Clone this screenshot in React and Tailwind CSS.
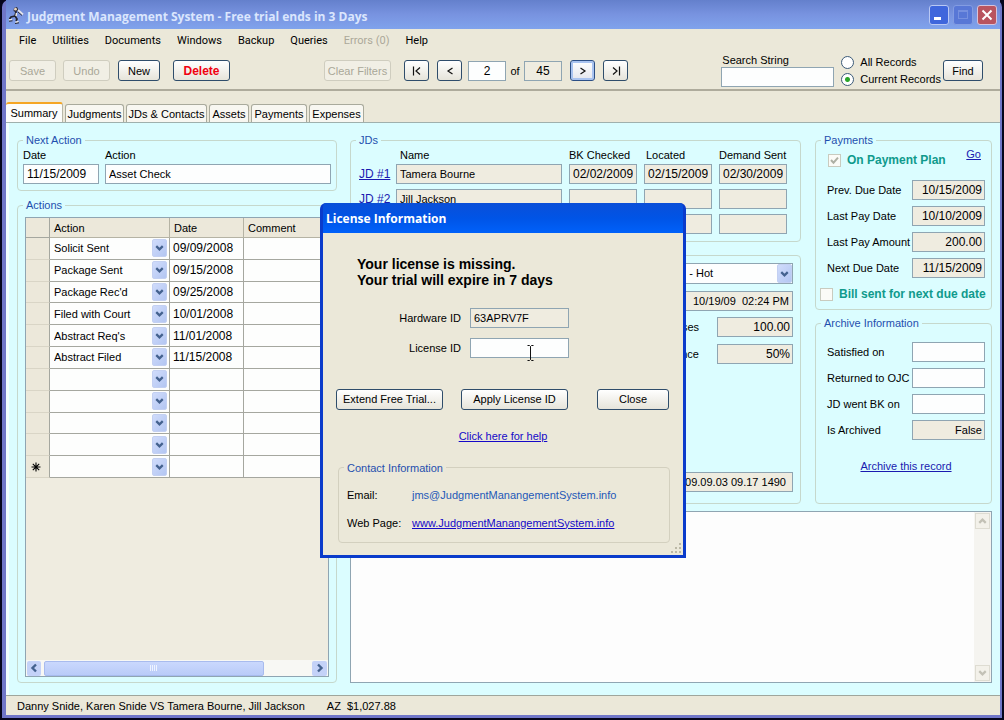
import React from "react";

const BODY = "font-['Liberation_Sans',Arial,sans-serif]";

function Group({ title, className = "", bodyClass = "", border = "border-[#c6d8cc]", children }) {
  return (
    <fieldset className={`min-w-0 rounded-[4px] border ${border} ${className}`}>
      {title && (
        <legend className="ml-[5px] px-[3px] leading-[14px] text-[#1f4fae]">{title}</legend>
      )}
      <div className={bodyClass}>{children}</div>
    </fieldset>
  );
}

function Field({ id, label, value = "", readOnly = false, size = "text-[11px]", className = "px-[3px]" }) {
  return (
    <input
      id={id}
      aria-label={label}
      defaultValue={value}
      readOnly={readOnly}
      className={`h-5 w-full min-w-0 border border-[#8fa5b2] leading-[18px] text-black outline-none ${size} ${
        readOnly ? "bg-[#efece0]" : "bg-[#fdfefe]"
      } ${className}`}
    />
  );
}

function XpButton({ children, className = "", disabled = false, label, active = false }) {
  const look = disabled
    ? "border-[#cfcdbf] bg-[#f1efe5] text-[#a9a798]"
    : active
      ? "border-[#2c4f86] bg-linear-to-b from-white to-[#e4e6ee] text-black shadow-[inset_0_0_0_2px_#a9c3f0]"
      : "border-[#2f4d6b] bg-linear-to-b from-white to-[#e6e4da] text-black";
  return (
    <button
      type="button"
      disabled={disabled}
      aria-label={label}
      className={`flex h-[21px] items-center justify-center rounded-[3px] border leading-[14px] whitespace-nowrap ${look} ${className}`}
    >
      {children}
    </button>
  );
}

function Chevron({ dir = "down", muted = false }) {
  const d = {
    down: "M3.5 5 L7 8.5 L10.5 5",
    up: "M3.5 9 L7 5.5 L10.5 9",
    left: "M9 3.5 L5.5 7 L9 10.5",
    right: "M5 3.5 L8.5 7 L5 10.5",
  }[dir];
  return (
    <svg viewBox="0 0 14 14" className="size-[14px]" aria-hidden="true">
      <path d={d} fill="none" stroke={muted ? "#c3c1b6" : "#44628f"} strokeWidth="2.4" />
    </svg>
  );
}

function DropArrow({ className = "" }) {
  return (
    <span
      className={`pointer-events-none absolute flex w-[15px] items-center justify-center rounded-[2px] border border-[#c3d0f2] bg-linear-to-br from-[#d0dcfb] to-[#b3c6f2] ${className}`}
    >
      <Chevron />
    </span>
  );
}

const NAV = {
  first: "M3.5 2.5 V11.5 M10 3.5 L6 7 L10 10.5",
  prev: "M9.5 4 L5 7 L9.5 10",
  next: "M4.5 4 L9 7 L4.5 10",
  last: "M4 3.5 L8 7 L4 10.5 M10.5 2.5 V11.5",
};

function NavIcon({ name }) {
  return (
    <svg viewBox="0 0 14 14" className="size-[14px]" aria-hidden="true">
      <path d={NAV[name]} fill="none" stroke="#111" strokeWidth="1.2" />
    </svg>
  );
}

function TitleBar() {
  return (
    <header className="flex h-[29px] items-center bg-linear-to-b from-[#6480cc] via-[#7893e0] to-[#80a3ec] pr-[3px] pl-[2px]">
      <svg viewBox="0 0 16 18" className="h-[18px] w-4" aria-hidden="true">
        <path d="M6 2 L9 1 L10.5 4 L8 6.5 L5.5 5 Z" fill="#2a2a35" />
        <circle cx="7.5" cy="3.2" r="1.4" fill="#e8d4c0" />
        <path d="M10 4 L15 8.5" stroke="#e4e4ea" strokeWidth="1.8" />
        <path d="M10 6 L14 9.5" stroke="#30303c" strokeWidth="1" />
        <path d="M8 6 L7 10 L9 13 L8 15 M7 10 L3 11 L1.5 13" stroke="#23232d" strokeWidth="1.7" fill="none" />
        <path d="M8.5 7 L8 10 M1 14 L4 13.5 M7.5 16.5 L10.5 15.5" stroke="#f0ece4" strokeWidth="1.5" />
        <path d="M1 15.2 L4.5 14.8 M7 17.5 L11 16.8" stroke="#23232d" strokeWidth="1" />
      </svg>
      <h1 className="ml-[3px] pt-1 font-['Open_Sans','Noto_Sans',sans-serif] text-[12px] leading-[16px] font-bold text-[#dbe6fd]">
        Judgment Management System - Free trial ends in 3 Days
      </h1>
      <div className="ml-auto flex gap-[4px]">
        <button type="button" aria-label="Minimize" className="flex size-[20px] items-end rounded-[3px] border border-[#b9c8f4] bg-[#3f66dc] p-1">
          <span className="h-[3px] w-[7px] bg-white" />
        </button>
        <button type="button" aria-label="Maximize" disabled className="flex size-[20px] items-center justify-center rounded-[3px] border border-[#839ce2] bg-[#5877d6]">
          <span className="h-[9px] w-[10px] border border-t-2 border-[#7690df]" />
        </button>
        <button type="button" aria-label="Close window" className="flex size-[20px] items-center justify-center rounded-[3px] border border-[#d5c3dc] bg-[#b9545f]">
          <svg viewBox="0 0 14 14" className="size-[14px]" aria-hidden="true">
            <path d="M2.5 2.5 L11.5 11.5 M11.5 2.5 L2.5 11.5" stroke="#fff" strokeWidth="2" />
          </svg>
        </button>
      </div>
    </header>
  );
}

const MENUS = ["File", "Utilities", "Documents", "Windows", "Backup", "Queries", "Errors (0)", "Help"];

function MenuBar() {
  return (
    <nav className="flex h-[24px] items-center gap-[16px] pl-[13px] font-['Roboto','Noto_Sans',sans-serif]">
      {MENUS.map((m) => (
        <button
          key={m}
          type="button"
          disabled={m === "Errors (0)"}
          className="leading-[14px] whitespace-nowrap text-black disabled:text-[#aca999]"
        >
          {m}
        </button>
      ))}
    </nav>
  );
}

function Radio({ id, label, checked }) {
  return (
    <div className="flex items-center gap-[6px]">
      <input
        id={id}
        type="radio"
        name="scope"
        defaultChecked={checked}
        className="size-[13px] appearance-none rounded-full border border-[#3b5a78] bg-white checked:bg-[radial-gradient(circle,#2ba52b_0_2px,#fff_3px)]"
      />
      <label htmlFor={id} className="leading-[14px] whitespace-nowrap">{label}</label>
    </div>
  );
}

function Toolbar() {
  return (
    <div className="flex h-[38px] items-start border-b-2 border-[#aeab9c] pr-[17px] pl-[3px]">
      <div className="flex pt-[7px]">
        <XpButton disabled className="w-[47px]">Save</XpButton>
        <XpButton disabled className="ml-[7px] w-[47px]">Undo</XpButton>
        <XpButton className="ml-2 w-[42px]">New</XpButton>
        <XpButton className="ml-[13px] w-[57px]">
          <span className="text-[12px] font-bold text-[#f00010]">Delete</span>
        </XpButton>
      </div>
      <div className="ml-[94px] flex items-center pt-[7px]">
        <XpButton disabled className="w-[67px]">Clear Filters</XpButton>
        <XpButton label="First record" className="ml-[13px] w-[25px]"><NavIcon name="first" /></XpButton>
        <XpButton label="Previous record" className="ml-2 w-[25px]"><NavIcon name="prev" /></XpButton>
        <div className="ml-[6px] w-[38px]"><Field label="Record number" value="2" size="text-[12px]" className="text-center" /></div>
        <span className="w-[18px] text-center leading-[14px]">of</span>
        <div className="w-[38px]"><Field label="Record count" value="45" readOnly size="text-[12px]" className="text-center" /></div>
        <XpButton label="Next record" active className="ml-2 w-[25px]"><NavIcon name="next" /></XpButton>
        <XpButton label="Last record" className="ml-2 w-[25px]"><NavIcon name="last" /></XpButton>
      </div>
      <div className="ml-auto flex">
        <div className="w-[113px]">
          <label htmlFor="search" className="block pl-px leading-[14px]">Search String</label>
          <Field id="search" />
        </div>
        <div className="ml-[7px] flex flex-col gap-[3px] pt-[2px]">
          <Radio id="all" label="All Records" />
          <Radio id="current" label="Current Records" checked />
        </div>
        <div className="ml-[2px] pt-[7px]"><XpButton className="w-[40px]">Find</XpButton></div>
      </div>
    </div>
  );
}

const TABS = [
  ["Summary", "w-[57px]"],
  ["Judgments", "w-[59px]"],
  ["JDs & Contacts", "w-[81px]"],
  ["Assets", "w-[40px]"],
  ["Payments", "w-[56px]"],
  ["Expenses", "w-[55px]"],
];

function Tabs() {
  return (
    <div role="tablist" className="flex h-[32px] items-end gap-[2px] border-b border-[#9fb0ad]">
      {TABS.map(([t, w], i) => (
        <button
          key={t}
          type="button"
          role="tab"
          aria-selected={i === 0}
          className={`rounded-t-[3px] leading-[16px] whitespace-nowrap ${w} ${
            i === 0
              ? "h-[20px] border-t-2 border-r border-t-[#f5a623] border-r-[#b9b8a8] bg-[#fcfdfb]"
              : "h-[18px] border border-b-0 border-[#a9aa9c] bg-[#f8f7f1]"
          }`}
        >
          {t}
        </button>
      ))}
    </div>
  );
}

function NextAction() {
  return (
    <Group title="Next Action" bodyClass="flex gap-[6px] px-[5px] pt-px pb-[6px]">
      <div className="w-[76px]">
        <label htmlFor="na-date" className="block pb-[2px] leading-[14px]">Date</label>
        <Field id="na-date" value="11/15/2009" size="text-[12px]" />
      </div>
      <div className="min-w-0 flex-1">
        <label htmlFor="na-action" className="block pb-[2px] leading-[14px]">Action</label>
        <Field id="na-action" value="Asset Check" />
      </div>
    </Group>
  );
}

const ROWS = [
  ["Solicit Sent", "09/09/2008"],
  ["Package Sent", "09/15/2008"],
  ["Package Rec'd", "09/25/2008"],
  ["Filed with Court", "10/01/2008"],
  ["Abstract Req's", "11/01/2008"],
  ["Abstract Filed", "11/15/2008"],
  ["", ""],
  ["", ""],
  ["", ""],
  ["", ""],
  ["", ""],
];

function Actions() {
  const head = "border-r border-b border-[#b5b3a4] pl-1 text-left font-normal";
  const cell = "border-r border-b border-[#a5a79f] bg-[#fdfefd] p-0";
  return (
    <Group title="Actions" className="flex flex-1 flex-col" bodyClass="flex flex-1 flex-col px-[7px] pt-[5px] pb-[5px]">
      <div className="flex flex-1 flex-col border border-[#8fa5b2] bg-[#efece0]">
        <table className="h-[260px] w-full table-fixed border-separate border-spacing-0 leading-[14px]">
          <thead>
            <tr className="h-[20px] bg-[#ece8da]">
              <th aria-label="Row" className="w-[24px] border-r border-b border-[#a5a79f]" />
              <th className={`w-[120px] ${head}`}>Action</th>
              <th className={`w-[74px] ${head}`}>Date</th>
              <th className={head}>Comment</th>
            </tr>
          </thead>
          <tbody>
            {ROWS.map(([action, date], i) => (
              <tr key={i}>
                <th scope="row" className="border-r border-b border-r-[#a5a79f] border-b-[#d9d5c6] bg-[#ece8da] p-0 font-normal">
                  {i === ROWS.length - 1 && (
                    <svg viewBox="0 0 10 10" className="ml-[5px] size-[10px]" aria-label="New row">
                      <path d="M5 0.5 V9.5 M0.5 5 H9.5 M1.8 1.8 L8.2 8.2 M8.2 1.8 L1.8 8.2" stroke="#000" strokeWidth="1.1" />
                    </svg>
                  )}
                </th>
                <td className={cell}>
                  <div className="relative flex items-center">
                    <select aria-label={`Action ${i + 1}`} className="h-[19px] w-full appearance-none bg-transparent pl-1 outline-none">
                      <option>{action}</option>
                    </select>
                    <DropArrow className="right-[2px] h-[18px]" />
                  </div>
                </td>
                <td className={`${cell} pl-[3px]! text-[12px]`}>{date}</td>
                <td className={cell} />
              </tr>
            ))}
          </tbody>
        </table>
        <div className="mt-auto flex h-[16px] items-center bg-[#f8f8f4] px-px">
          <button type="button" aria-label="Scroll left" className="flex h-[15px] w-[14px] items-center justify-center rounded-[2px] bg-[#c4d2f8]">
            <Chevron dir="left" />
          </button>
          <div className="flex-1 px-[3px]">
            <div className="flex h-[15px] w-[83%] items-center justify-center gap-px rounded-[2px] border border-[#a8bbee] bg-linear-to-b from-[#cad8fd] to-[#b9cbf8]">
              {[0, 1, 2, 3].map((n) => (
                <span key={n} className="h-[6px] w-px bg-[#eef3ff]" />
              ))}
            </div>
          </div>
          <button type="button" aria-label="Scroll right" className="flex h-[15px] w-[15px] items-center justify-center rounded-[2px] bg-[#c4d2f8]">
            <Chevron dir="right" />
          </button>
        </div>
      </div>
    </Group>
  );
}

const JDS = [
  ["JD #1", "Tamera Bourne", "02/02/2009", "02/15/2009", "02/30/2009"],
  ["JD #2", "Jill Jackson", "", "", ""],
  ["", "", "", "", ""],
];

function Debtors() {
  return (
    <Group title="JDs" bodyClass="pt-px pr-[13px] pb-[7px] pl-2">
      <div className="grid grid-cols-[30px_1fr_68px_68px_68px] items-center gap-x-[7px] gap-y-[5px]">
        <div className="col-start-2 -mb-[3px] pl-1 leading-[14px]">Name</div>
        <div className="-mb-[3px] leading-[14px] whitespace-nowrap">BK Checked</div>
        <div className="-mb-[3px] pl-[2px] leading-[14px]">Located</div>
        <div className="-mb-[3px] leading-[14px] whitespace-nowrap">Demand Sent</div>
        {JDS.map(([jd, name, bk, loc, dem], i) => (
          <React.Fragment key={i}>
            {jd ? <a href="#jd" className="text-[12px] whitespace-nowrap text-[#1a1ab0] underline">{jd}</a> : <span />}
            <Field label={`Name ${i + 1}`} value={name} readOnly />
            <Field label={`BK checked ${i + 1}`} value={bk} readOnly size="text-[12px]" />
            <Field label={`Located ${i + 1}`} value={loc} readOnly size="text-[12px]" />
            <Field label={`Demand sent ${i + 1}`} value={dem} readOnly size="text-[12px]" />
          </React.Fragment>
        ))}
      </div>
    </Group>
  );
}

function CaseStatus() {
  return (
    <Group className="mt-[13px] flex-1" bodyClass="flex h-full flex-col items-end pt-[7px] pr-[7px] pb-[11px]">
      <div className="relative flex w-[120px]">
        <select aria-label="Priority" className="h-[21px] w-full appearance-none border border-[#8fa5b2] bg-[#fdfefe] pl-[3px] outline-none">
          <option>{"1\u00a0 - Hot"}</option>
        </select>
        <DropArrow className="top-px right-px h-[19px]" />
      </div>
      <div className="mt-[7px] w-[120px]"><Field label="Updated" value="10/19/09  02:24 PM" readOnly className="px-[3px] text-right" /></div>
      <div className="mt-[6px] flex items-center gap-[18px]">
        <label htmlFor="expenses">Expenses</label>
        <div className="w-[76px]"><Field id="expenses" value="100.00" readOnly size="text-[12px]" className="px-[2px] text-right" /></div>
      </div>
      <div className="mt-[7px] flex items-center gap-[18px]">
        <label htmlFor="balance">Balance</label>
        <div className="w-[76px]"><Field id="balance" value="50%" readOnly size="text-[12px]" className="px-[2px] text-right" /></div>
      </div>
      <div className="mt-auto w-[120px]"><Field label="Case number" value="09.09.03 09.17 1490" readOnly className="pr-[6px] text-right" /></div>
    </Group>
  );
}

function Check({ id, label, checked = false }) {
  return (
    <div className="flex items-center gap-[6px]">
      <span className="relative flex size-[13px]">
        <input id={id} type="checkbox" defaultChecked={checked} className="size-[13px] appearance-none border border-[#c9cbbf] bg-[#fbfbf7]" />
        {checked && (
          <svg viewBox="0 0 13 13" className="pointer-events-none absolute inset-0" aria-hidden="true">
            <path d="M3 6 L5.5 8.7 L10 3.7" fill="none" stroke="#aeb0a4" strokeWidth="2" />
          </svg>
        )}
      </span>
      <label htmlFor={id} className="text-[12px] leading-[14px] font-bold whitespace-nowrap text-[#109a8c]">{label}</label>
    </div>
  );
}

function FieldRow({ id, label, value, readOnly, size = "text-[12px]" }) {
  return (
    <div className="flex items-center">
      <label htmlFor={id} className="flex-1 leading-[14px] whitespace-nowrap">{label}</label>
      <div className="w-[73px]"><Field id={id} value={value} readOnly={readOnly} size={size} className="px-[2px] text-right" /></div>
    </div>
  );
}

function Payments() {
  return (
    <Group title="Payments" bodyClass="pt-px pr-[6px] pb-2 pl-1">
      <div className="flex items-start justify-between pr-1 pl-2">
        <div className="pt-[5px]"><Check id="plan" label="On Payment Plan" checked /></div>
        <a href="#go" className="text-[11px] leading-[12px] text-[#1a1ab0] underline">Go</a>
      </div>
      <div className="flex flex-col gap-[6px] pt-[13px] pl-[7px]">
        <FieldRow id="prev" label="Prev. Due Date" value="10/15/2009" readOnly />
        <FieldRow id="lastp" label="Last Pay Date" value="10/10/2009" readOnly />
        <FieldRow id="amount" label="Last Pay Amount" value="200.00" readOnly />
        <FieldRow id="next" label="Next Due Date" value="11/15/2009" readOnly />
      </div>
      <div className="pt-[9px]"><Check id="bill" label="Bill sent for next due date" /></div>
    </Group>
  );
}

function Archive() {
  return (
    <Group title="Archive Information" className="mt-[6px] flex-1" bodyClass="pt-3 pr-[6px] pl-[11px]">
      <div className="flex flex-col gap-[6px]">
        <FieldRow id="satisfied" label="Satisfied on" value="" />
        <FieldRow id="returned" label="Returned to OJC" value="" />
        <FieldRow id="bk" label="JD went BK on" value="" />
        <FieldRow id="archived" label="Is Archived" value="False" readOnly size="text-[11px]" />
      </div>
      <div className="pt-[18px] text-center">
        <a href="#archive" className="text-[#1a1ab0] underline">Archive this record</a>
      </div>
    </Group>
  );
}

function Notes() {
  return (
    <div className="mt-[7px] flex flex-1 border border-[#8fa5b2] bg-[#fdfdfd]">
      <textarea aria-label="Notes" className="min-w-0 flex-1 resize-none bg-transparent p-1 outline-none" />
      <div className="flex w-[17px] flex-col justify-between bg-[#f5f4f0] p-px">
        <button type="button" aria-label="Scroll up" disabled className="flex h-[16px] items-center justify-center border border-[#dedcd2] bg-[#f3f1ea]">
          <Chevron dir="up" muted />
        </button>
        <button type="button" aria-label="Scroll down" disabled className="flex h-[16px] items-center justify-center border border-[#dedcd2] bg-[#f3f1ea]">
          <Chevron muted />
        </button>
      </div>
    </div>
  );
}

function LicenseDialog() {
  return (
    <div className="absolute inset-0 flex items-center justify-center pt-[40px] pl-[2px]">
      <section role="dialog" aria-labelledby="dlg-title" className="w-[366px] rounded-t-[6px] border-[3px] border-t-0 border-[#0a3bcb] bg-[#0a3bcb]">
        <h2
          id="dlg-title"
          className="h-[30px] rounded-t-[4px] bg-linear-to-b from-[#0a4fd8] via-[#0054e6] to-[#0061fa] pt-2 pl-[3px] font-['Open_Sans','Noto_Sans',sans-serif] text-[12px] leading-[16px] font-bold text-white"
        >
          License Information
        </h2>
        <div className="relative bg-[#ebe8d9] px-[13px] pt-[23px] pb-[12px]">
          <p className="pl-[21px] text-[14px] leading-[16px] font-bold">
            Your license is missing.
            <br />
            Your trial will expire in 7 days
          </p>
          <div className="flex flex-col gap-[10px] pt-5">
            <div className="flex items-center gap-[9px]">
              <label htmlFor="hw" className="w-[125px] text-right leading-[14px]">Hardware ID</label>
              <div className="w-[99px]"><Field id="hw" value="63APRV7F" readOnly /></div>
            </div>
            <div className="flex items-center gap-[9px]">
              <label htmlFor="lic" className="w-[125px] text-right leading-[14px]">License ID</label>
              <div className="relative w-[99px]">
                <Field id="lic" />
                <svg viewBox="0 0 7 16" className="pointer-events-none absolute top-[7px] left-[57px] h-4 w-[7px]" aria-hidden="true">
                  <path d="M0.5 0.5 H2.5 L3.5 1.5 L4.5 0.5 H6.5 M3.5 1.5 V14.5 M0.5 15.5 H2.5 L3.5 14.5 L4.5 15.5 H6.5" fill="none" stroke="#111" />
                </svg>
              </div>
            </div>
          </div>
          <div className="flex pt-[31px] pr-px">
            <XpButton className="w-[107px]">Extend Free Trial...</XpButton>
            <XpButton className="ml-[18px] w-[107px]">Apply License ID</XpButton>
            <XpButton className="ml-auto w-[72px]">Close</XpButton>
          </div>
          <div className="pt-[19px] text-center leading-[14px]">
            <a href="#help" className="text-[#1508c8] underline">Click here for help</a>
          </div>
          <Group
            title="Contact Information"
            border="border-[#d3d0bf]"
            className="mt-[18px] ml-[2px]"
            bodyClass="grid grid-cols-[65px_1fr] gap-y-[14px] pt-[13px] pb-[12px] pl-2 leading-[14px]"
          >
            <span>Email:</span>
            <span className="text-[#2458b8]">jms@JudgmentManangementSystem.info</span>
            <span className="whitespace-nowrap">Web Page:</span>
            <a href="#web" className="text-[#1508c8] underline">www.JudgmentManangementSystem.info</a>
          </Group>
          <svg viewBox="0 0 12 12" className="absolute right-px bottom-px size-[12px]" aria-hidden="true">
            <path d="M9 1h2v2h-2z M5 5h2v2h-2z M9 5h2v2h-2z M1 9h2v2h-2z M5 9h2v2h-2z M9 9h2v2h-2z" fill="#bbb8a6" />
          </svg>
        </div>
      </section>
    </div>
  );
}

export default function App() {
  return (
    <div className={`relative flex min-h-screen flex-col bg-[#05051c] pr-[2px] pb-[2px] pl-[2px] text-[11px] text-black ${BODY}`}>
      <main className="flex flex-1 flex-col rounded-t-[7px] border-r-2 border-b-[3px] border-l-4 border-[#7076c8] bg-[#ebe8d9]">
        <TitleBar />
        <MenuBar />
        <Toolbar />
        <Tabs />
        <div className="flex flex-1 gap-[13px] border-l-[3px] border-[#f2ffff] bg-[#dbfdff] pt-[10px] pr-2 pb-[12px] pl-2">
          <div className="flex w-[320px] shrink-0 flex-col gap-[7px]">
            <NextAction />
            <Actions />
          </div>
          <div className="flex min-w-0 flex-1 flex-col">
            <div className="flex gap-[14px]">
              <div className="flex min-w-0 flex-1 flex-col">
                <Debtors />
                <CaseStatus />
              </div>
              <div className="flex h-[371px] w-[177px] flex-col">
                <Payments />
                <Archive />
              </div>
            </div>
            <Notes />
          </div>
        </div>
        <footer className="flex h-[20px] items-center gap-[22px] border-t border-[#9fa69c] pl-[11px] leading-[14px]">
          <span>Danny Snide, Karen Snide VS Tamera Bourne, Jill Jackson</span>
          <span className="whitespace-pre">AZ  $1,027.88</span>
        </footer>
      </main>
      <LicenseDialog />
    </div>
  );
}
